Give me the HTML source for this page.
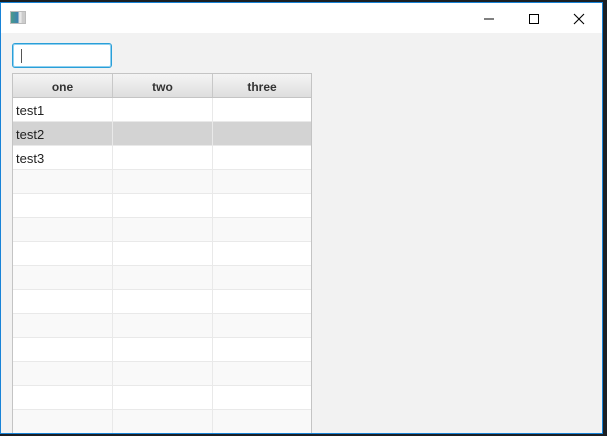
<!DOCTYPE html>
<html><head><meta charset="utf-8"><style>
*{margin:0;padding:0;box-sizing:border-box}
body{width:607px;height:436px;background:#1b1f24;position:relative;overflow:hidden;font-family:"Liberation Sans",sans-serif}
.win{position:absolute;left:0;top:2px;width:603px;height:432px;border:1px solid #1883d7;background:#f2f2f2;overflow:hidden}
.title{position:absolute;left:0;top:0;width:100%;height:30px;background:#fff}
.ico{position:absolute;left:9px;top:8px;width:16px;height:13px;border:1px solid #bbb;background:linear-gradient(90deg,#4a9a8a 0,#3a7fb5 55%,#ddd 55%,#eee 75%,#ccc 75%)}
.tf{position:absolute;left:11px;top:40px;width:100px;height:25px;border:1px solid #2a9fd8;border-radius:3px;background:#fff;box-shadow:0 0 0 1px #8fd0f0 inset}
.caret{position:absolute;left:8px;top:5px;width:1px;height:14px;background:#555}
.tbl{position:absolute;left:11px;top:70px;width:300px;height:360px;border:1px solid #c4c4c4;border-bottom:none;background:#fff;overflow:hidden}
.hd{position:absolute;left:0;top:0;width:100%;height:24px;background:linear-gradient(#f4f4f4,#dedede);border-bottom:1px solid #c4c4c4}
.hd div{position:absolute;top:0;height:23px;line-height:27px;text-align:center;font-weight:bold;font-size:12px;color:#333;border-right:1px solid #c8c8c8}
.row{position:absolute;left:0;width:100%;height:24px;border-bottom:1px solid #e9e9e9;font-size:13px;color:#222;line-height:25px;padding-left:3px}
.cl{position:absolute;top:24px;bottom:0;width:1px;background:#e9e9e9}
</style></head><body>
<div class="win">
<div class="title"><div class="ico"></div>
<svg style="position:absolute;left:480px;top:9px" width="110" height="14">
<line x1="3" y1="7" x2="13" y2="7" stroke="#000"/>
<rect x="48.5" y="2.5" width="9" height="9" fill="none" stroke="#000"/>
<path d="M93 2 L103 12 M103 2 L93 12" stroke="#000" stroke-width="1.1"/>
</svg></div>
<div class="tf"><div class="caret"></div></div>
<div class="tbl">
<div class="row" style="top:24px">test1</div>
<div class="row" style="top:48px;background:#d3d3d3">test2</div>
<div class="row" style="top:72px">test3</div>
<div class="row" style="top:96px;background:#f9f9f9"></div>
<div class="row" style="top:120px"></div>
<div class="row" style="top:144px;background:#f9f9f9"></div>
<div class="row" style="top:168px"></div>
<div class="row" style="top:192px;background:#f9f9f9"></div>
<div class="row" style="top:216px"></div>
<div class="row" style="top:240px;background:#f9f9f9"></div>
<div class="row" style="top:264px"></div>
<div class="row" style="top:288px;background:#f9f9f9"></div>
<div class="row" style="top:312px"></div>
<div class="row" style="top:336px;background:#f9f9f9"></div>
<div class="cl" style="left:99px"></div>
<div class="cl" style="left:199px"></div>
<div class="hd"><div style="left:0;width:100px">one</div><div style="left:100px;width:100px">two</div><div style="left:200px;width:98px;border-right:none">three</div></div>
</div>
</div>
</body></html>
